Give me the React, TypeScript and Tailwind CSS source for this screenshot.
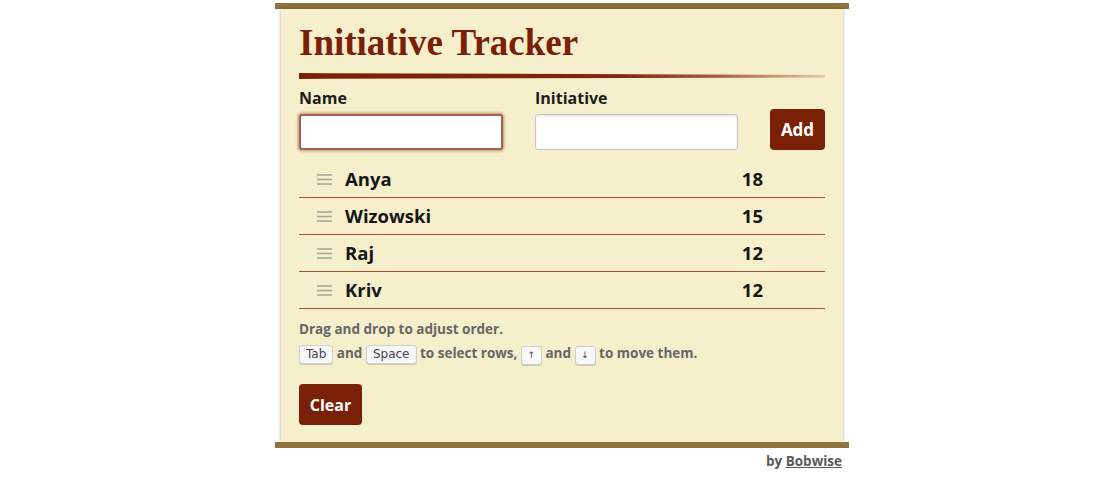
import React from "react";

const rows = [
  { name: "Anya", init: 18 },
  { name: "Wizowski", init: 15 },
  { name: "Raj", init: 12 },
  { name: "Kriv", init: 12 },
];

function Grip() {
  return (
    <svg width="15" height="11" viewBox="0 0 15 11" className="shrink-0">
      <line x1="0" y1="1" x2="15" y2="1" stroke="#a9a79c" strokeWidth="1.6" />
      <line x1="0" y1="5.5" x2="15" y2="5.5" stroke="#a9a79c" strokeWidth="1.6" />
      <line x1="0" y1="10" x2="15" y2="10" stroke="#a9a79c" strokeWidth="1.6" />
    </svg>
  );
}

function Kbd({ children, arrow }: { children: React.ReactNode; arrow?: boolean }) {
  return (
    <kbd
      className={
        arrow
          ? "inline-block w-[21px] rounded-[3px] border border-[#cfcfcf] bg-[#f8f8f8] text-center font-['DejaVu_Sans',sans-serif] text-[9px] font-normal leading-[17px] text-[#444] shadow-[0_1px_0_rgba(0,0,0,0.15)]"
          : "inline-block rounded-[3px] border border-[#cfcfcf] bg-[#f8f8f8] px-[6px] font-['DejaVu_Sans',sans-serif] text-[12px] font-normal leading-[17px] text-[#444] shadow-[0_1px_0_rgba(0,0,0,0.15)]"
      }
    >
      {children}
    </kbd>
  );
}

export default function App() {
  return (
    <div className="min-h-screen bg-white pt-[3px] font-['Open_Sans',sans-serif]">
      <div className="flex justify-center pl-[5px]">
        <div className="w-[574px]">
          <div className="h-[6px] bg-[#8e743c]" />
          <div className="mx-[6px] bg-[#f5efcb] px-[18px] pb-[17px] pt-[12px] shadow-[0_0_3px_rgba(0,0,0,0.35)]">
            <h1 className="font-['Liberation_Serif',serif] text-[37px] font-bold leading-[44px] text-[#7a2006]">
              Initiative Tracker
            </h1>
            <svg width="526" height="6" viewBox="0 0 526 6" className="mt-[8px] block">
              <defs>
                <linearGradient id="bar" x1="0" y1="0" x2="1" y2="0">
                  <stop offset="0" stopColor="#7a2006" />
                  <stop offset="0.6" stopColor="#7e2709" />
                  <stop offset="0.8" stopColor="#a8603c" />
                  <stop offset="1" stopColor="#e2caa2" />
                </linearGradient>
              </defs>
              <polygon points="0,0 30,0.2 526,2 526,4.6 30,5.8 0,6" fill="url(#bar)" />
            </svg>

            <div className="mt-[9px] flex items-end gap-[32px]">
              <div className="flex w-[204px] flex-col">
                <label className="text-[16px] font-bold leading-[20px] text-[#1c1c1c]">Name</label>
                <input
                  autoFocus
                  className="mt-[6px] h-[36px] w-full rounded-[3px] border-2 border-[#a36250] bg-white px-[7px] text-[16px] outline-none shadow-[0_0_3px_1px_rgba(150,80,60,0.6)]"
                />
              </div>
              <div className="flex w-[203px] flex-col">
                <label className="text-[16px] font-bold leading-[20px] text-[#1c1c1c]">Initiative</label>
                <input className="mt-[6px] h-[36px] w-full rounded-[3px] border border-[#c4c4c4] bg-white px-[7px] text-[16px] outline-none shadow-[inset_0_1px_2px_rgba(0,0,0,0.12)]" />
              </div>
              <button className="h-[41px] w-[55px] rounded-[4px] bg-[#7a2006] text-[17px] font-bold text-white">
                Add
              </button>
            </div>

            <ul className="mt-[11px]">
              {rows.map((r) => (
                <li
                  key={r.name}
                  className="flex h-[37px] items-center border-b border-[#a0522f] pl-[18px]"
                >
                  <Grip />
                  <span className="ml-[13px] text-[18.5px] font-bold text-[#161616]">{r.name}</span>
                  <span className="ml-auto mr-[62px] text-[18.5px] font-bold text-[#161616]">{r.init}</span>
                </li>
              ))}
            </ul>

            <p className="mt-[10px] text-[13.5px] font-bold leading-[20px] text-[#666]">
              Drag and drop to adjust order.
            </p>
            <p className="mt-[2px] text-[13.5px] font-bold leading-[24px] text-[#666]">
              <Kbd>Tab</Kbd> and <Kbd>Space</Kbd> to select rows, <Kbd arrow>↑</Kbd> and <Kbd arrow>↓</Kbd> to move them.
            </p>

            <button className="mt-[19px] h-[41px] w-[63px] rounded-[4px] bg-[#7a2006] text-[16px] font-bold text-white">
              Clear
            </button>
          </div>
          <div className="h-[6px] bg-[#8e743c]" />
          <div className="mt-[3px] pr-[7px] text-right text-[13.5px] font-bold leading-[20px] text-[#5a5a5a]">
            by <a className="underline">Bobwise</a>
          </div>
        </div>
      </div>
    </div>
  );
}
